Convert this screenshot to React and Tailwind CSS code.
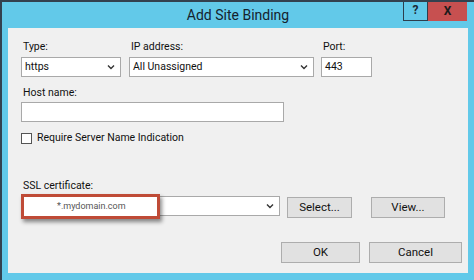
import React from 'react';

const Chevron = () => (
  <svg width="8" height="6" viewBox="0 0 8 6" className="shrink-0">
    <polyline points="1,1.5 4,4.5 7,1.5" fill="none" stroke="#333" strokeWidth="1.4" />
  </svg>
);

const Select = ({ value, className = '' }) => (
  <div
    className={`h-[20px] bg-white border border-[#a9a9a9] flex items-center justify-between pl-[3px] pr-[5px] text-[10.5px] text-[#111] ${className}`}
  >
    <span>{value}</span>
    <Chevron />
  </div>
);

const Label = ({ children }) => (
  <div className="h-[14px] leading-[14px] pl-[2px] text-[10.5px] text-[#111]">{children}</div>
);

const Button = ({ children, className = '' }) => (
  <button
    className={`bg-[#e1e1e1] border border-[#adadad] text-[11.5px] text-[#111] flex items-center justify-center ${className}`}
  >
    {children}
  </button>
);

export default function App() {
  return (
    <div
      className="w-[474px] h-[280px] bg-[#62c9e9] border-l-2 border-t-2 border-[#33414f] flex flex-col overflow-hidden"
      style={{ fontFamily: 'Roboto, "Noto Sans", sans-serif' }}
    >
      {/* Title bar */}
      <div className="h-[26px] shrink-0 grid grid-cols-[1fr_auto_1fr] items-start">
        <div />
        <div className="pt-[3px] text-[14px] leading-[20px] text-[#15222d]">Add Site Binding</div>
        <div className="flex justify-end pr-[7px] -mt-[2px]">
          <div className="w-[25px] h-[21px] border border-t-0 border-[#2d3e4d] flex items-center justify-center text-[12px] font-bold text-[#1b2a36]">
            ?
          </div>
          <div className="w-[39px] h-[21px] bg-[#c75050] flex items-center justify-center text-[12px] font-bold text-[#1b1b1b]">
            X
          </div>
        </div>
      </div>

      {/* Content */}
      <div className="ml-[6px] mr-[6px] h-[245px] bg-[#f0f0f0] pl-[13px] pt-[12px] flex flex-col">
        <div className="flex gap-[8px]">
          <div className="flex flex-col gap-[3px] w-[100px]">
            <Label>Type:</Label>
            <Select value="https" />
          </div>
          <div className="flex flex-col gap-[3px] w-[185px]">
            <Label>IP address:</Label>
            <Select value="All Unassigned" />
          </div>
          <div className="flex flex-col gap-[3px] w-[51px] ml-[-1px]">
            <Label>Port:</Label>
            <div className="h-[20px] bg-white border border-[#a9a9a9] pl-[3px] text-[10.5px] leading-[18px] text-[#111]">443</div>
          </div>
        </div>

        <div className="mt-[9px] flex flex-col gap-[2px] w-[263px]">
          <Label>Host name:</Label>
          <div className="h-[20px] bg-white border border-[#a9a9a9]" />
        </div>

        <div className="mt-[9px] flex items-center gap-[5px] h-[14px]">
          <div className="w-[11px] h-[11px] bg-white border border-[#555]" />
          <span className="text-[10.5px] text-[#111]">Require Server Name Indication</span>
        </div>

        <div className="mt-[34px] flex flex-col gap-[3px]">
          <Label>SSL certificate:</Label>
          <div className="flex items-start">
            <div className="relative w-[259px]">
              <Select value="" />
              <div className="absolute left-0 top-[-2px] w-[139px] h-[25px] bg-white border-[3px] border-[#bf4b37] shadow-[2px_3px_4px_rgba(0,0,0,0.45)] flex items-center pl-[33px] text-[9px] text-[#555]">
                *.mydomain.com
              </div>
            </div>
            <Button className="ml-[7px] mt-[1px] w-[65px] h-[21px]">Select...</Button>
            <Button className="ml-[19px] mt-[1px] w-[74px] h-[21px]">View...</Button>
          </div>
        </div>

        <div className="mt-[24px] flex">
          <Button className="ml-[260px] w-[79px] h-[21px] border-[#4a8fd0]">OK</Button>
          <Button className="ml-[9px] w-[93px] h-[21px]">Cancel</Button>
        </div>
      </div>
    </div>
  );
}
